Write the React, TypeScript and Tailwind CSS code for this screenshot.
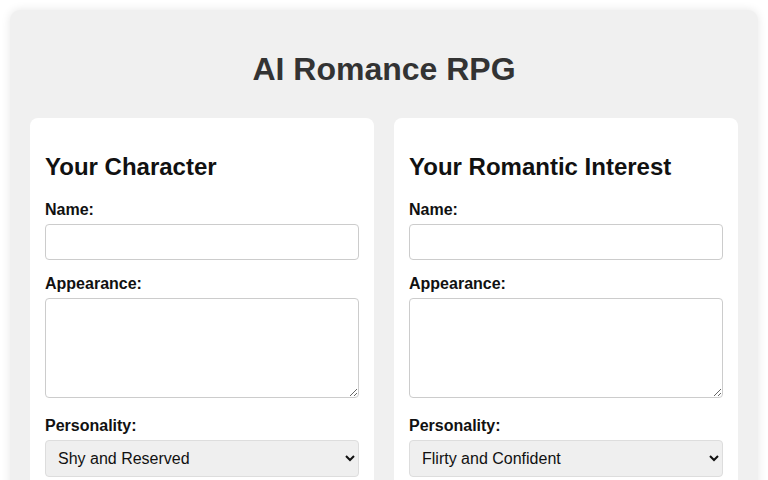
import React from 'react';

const fieldClass = 'block w-full rounded border border-[#ccc] bg-white px-2 py-2 text-base';

function CharacterCard({ title, personality, options }: {
    title: string;
    personality: string;
    options: string[];
}) {
    return (
        <div className="rounded-lg bg-white px-[15px] pt-[35px] pb-5">
            <h2 className="mb-5 text-[24px] font-bold leading-[28px] text-[#111]">{title}</h2>

            <label className="mb-[5px] block text-base font-bold leading-[18px] text-[#111]">Name:</label>
            <input type="text" className={`${fieldClass} mb-[15px] h-9`} />

            <label className="mb-[5px] block text-base font-bold leading-[18px] text-[#111]">Appearance:</label>
            <textarea className={`${fieldClass} mb-[19px] h-[100px] resize-y`} />

            <label className="mb-[5px] block text-base font-bold leading-[18px] text-[#111]">Personality:</label>
            <select
                defaultValue={personality}
                className="block h-[37px] w-full rounded border border-[#ddd] bg-[#efefef] pl-2 pr-1 text-base text-[#111]"
            >
                {options.map((o) => (
                    <option key={o} value={o}>{o}</option>
                ))}
            </select>
        </div>
    );
}

export default function App() {
    const personalities = ['Shy and Reserved', 'Flirty and Confident', 'Witty and Sarcastic', 'Kind and Gentle'];

    return (
        <div className="min-h-screen bg-white p-[10px] font-['Liberation_Sans',Arial,sans-serif]">
            <div className="rounded-[10px] bg-[#f0f0f0] px-5 pt-5 pb-10 shadow-[0_0_10px_rgba(0,0,0,0.1)]">
                <h1 className="mt-[21px] mb-[30px] text-center text-[32px] font-bold leading-[37px] text-[#333]">
                    AI Romance RPG
                </h1>

                {/* Character cards */}
                <div className="grid grid-cols-2 gap-5">
                    <CharacterCard title="Your Character" personality="Shy and Reserved" options={personalities} />
                    <CharacterCard title="Your Romantic Interest" personality="Flirty and Confident" options={personalities} />
                </div>
            </div>
        </div>
    );
}
